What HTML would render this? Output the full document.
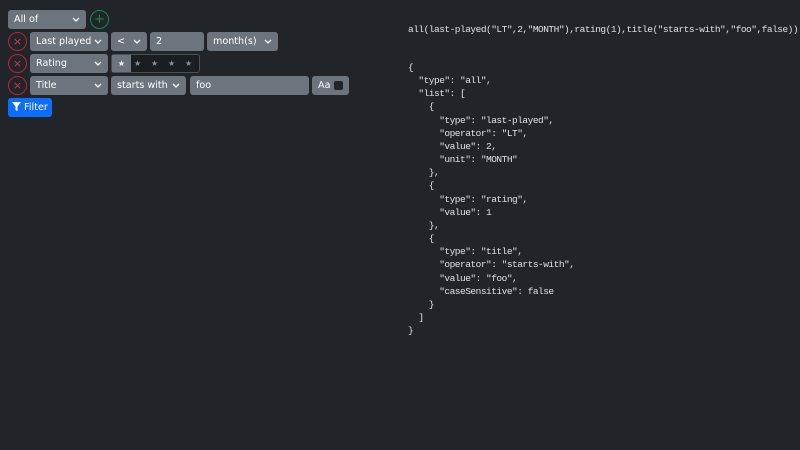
<!DOCTYPE html>
<html><head><meta charset="utf-8"><style>
*{box-sizing:border-box;margin:0;padding:0}
body{width:800px;height:450px;background:#212529;font-family:"DejaVu Sans","Liberation Sans",sans-serif;font-size:9.6px;color:#fff;position:relative;overflow:hidden}
.b{position:absolute;height:19px;background:#6c757d;border-radius:3px;line-height:19px;padding-left:6px;color:#fff;white-space:nowrap}
.b svg{position:absolute;right:6px;top:7px}
.c{position:absolute;width:19px;height:19px;border-radius:50%;text-align:center;line-height:17px;font-size:11px}
.x{border:1px solid #b02a37;color:#dc3545}
.p{border:1px solid #198754;color:#198754;font-size:13px}
pre{position:absolute;font-family:"Liberation Mono","DejaVu Sans Mono",monospace;font-size:9.5px;letter-spacing:-0.5px;line-height:13.15px;color:#dee2e6}
</style></head><body>
<div class="b" style="left:8px;top:10px;width:78px">All of<svg width="8" height="6"><path d="M1 1l3 3 3-3" stroke="#fff" stroke-width="1.3" fill="none"/></svg></div>
<div class="c p" style="left:90px;top:10px">+</div>

<div class="c x" style="left:8px;top:32px">×</div>
<div class="b" style="left:30px;top:32px;width:78px">Last played<svg width="8" height="6"><path d="M1 1l3 3 3-3" stroke="#fff" stroke-width="1.3" fill="none"/></svg></div>
<div class="b" style="left:111px;top:32px;width:36px">&lt;<svg width="8" height="6"><path d="M1 1l3 3 3-3" stroke="#fff" stroke-width="1.3" fill="none"/></svg></div>
<div class="b" style="left:150px;top:32px;width:54px">2</div>
<div class="b" style="left:207px;top:32px;width:71px">month(s)<svg width="8" height="6"><path d="M1 1l3 3 3-3" stroke="#fff" stroke-width="1.3" fill="none"/></svg></div>

<div class="c x" style="left:8px;top:54px">×</div>
<div class="b" style="left:30px;top:54px;width:78px">Rating<svg width="8" height="6"><path d="M1 1l3 3 3-3" stroke="#fff" stroke-width="1.3" fill="none"/></svg></div>
<div style="position:absolute;left:111px;top:54px;width:89px;height:19px;border:1px solid #495057;border-radius:3px;background:#1b1e21;font-size:8px;line-height:17px;color:#8a9096">
<span style="position:absolute;left:0;top:0;width:19px;height:17px;background:#6c757d;color:#fff;text-align:center">★</span>
<span style="position:absolute;left:22px">★</span><span style="position:absolute;left:39px">★</span><span style="position:absolute;left:56px">★</span><span style="position:absolute;left:73px">★</span></div>

<div class="c x" style="left:8px;top:76px">×</div>
<div class="b" style="left:30px;top:76px;width:78px">Title<svg width="8" height="6"><path d="M1 1l3 3 3-3" stroke="#fff" stroke-width="1.3" fill="none"/></svg></div>
<div class="b" style="left:111px;top:76px;width:75px">starts with<svg width="8" height="6"><path d="M1 1l3 3 3-3" stroke="#fff" stroke-width="1.3" fill="none"/></svg></div>
<div class="b" style="left:190px;top:76px;width:119px">foo</div>
<div class="b" style="left:312px;top:76px;width:37px">Aa<span style="position:absolute;left:22px;top:5px;width:9px;height:9px;background:#212529;border-radius:2px"></span></div>

<div class="b" style="left:8px;top:98px;width:44px;height:19px;background:#0d6efd;padding:0 0 0 4px"><svg width="9" height="9" style="position:static;vertical-align:-1px"><path d="M0 0h9L5.5 4.5V9L3.5 8V4.5z" fill="#fff"/></svg> Filter</div>

<pre style="left:408px;top:23px">all(last-played("LT",2,"MONTH"),rating(1),title("starts-with","foo",false))</pre>
<pre style="left:408px;top:61px">{
  "type": "all",
  "list": [
    {
      "type": "last-played",
      "operator": "LT",
      "value": 2,
      "unit": "MONTH"
    },
    {
      "type": "rating",
      "value": 1
    },
    {
      "type": "title",
      "operator": "starts-with",
      "value": "foo",
      "caseSensitive": false
    }
  ]
}</pre>
</body></html>
